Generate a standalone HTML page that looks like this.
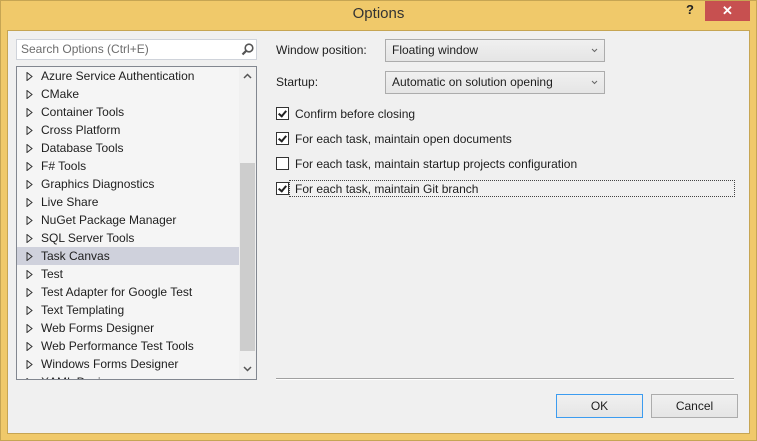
<!DOCTYPE html>
<html><head><meta charset="utf-8"><style>
*{margin:0;padding:0;box-sizing:border-box}
body{width:757px;height:441px;overflow:hidden;background:#f0c96a;font-family:"Liberation Sans",sans-serif;font-size:12px;color:#1e1e1e;position:relative}
.frame{position:absolute;left:0;top:0;width:757px;height:441px;border:1px solid #c6a553}
.title{position:absolute;left:0;top:5px;width:757px;text-align:center;font-size:15px;color:#333}
.help{position:absolute;left:686px;top:2px;font-weight:bold;font-size:13px;color:#222}
.close{position:absolute;left:705px;top:1px;width:45px;height:20px;background:#c75050;color:#fff;text-align:center;font-size:13px;line-height:20px;font-weight:bold}
.client{position:absolute;left:7px;top:30px;width:743px;height:404px;background:#f0f0f0;border:1px solid #c6a553}
.abs{position:absolute}
.search{left:16px;top:39px;width:241px;height:21px;background:#fff;border:1px solid #cfd3da;color:#6d6d6d;padding:2px 0 0 4px}
.tree{left:16px;top:66px;width:241px;height:314px;background:#f5f5f5;border:1px solid #828790;overflow:hidden}
.row{position:absolute;left:0;width:222px;height:18px;line-height:18px;padding-left:24px}
.row.sel{background:#cfd1dc}
.row svg{position:absolute;left:9px;top:5px}
.sb{position:absolute;left:222px;top:0;width:17px;height:312px;background:#f0f0f0}
.thumb{position:absolute;left:1px;top:96px;width:15px;height:188px;background:#cdcdcd}
.lbl{position:absolute}
.combo{position:absolute;left:385px;width:220px;height:23px;border:1px solid #acacac;background:linear-gradient(#f0f0f0,#e5e5e5);padding:3px 0 0 6px}
.combo svg{position:absolute;right:6px;top:8px}
.cb{position:absolute;left:276px;width:13px;height:13px;border:1px solid #333;background:#fff}
.cb.on::after{content:"";position:absolute;left:3px;top:1px;width:3px;height:6px;border:solid #222;border-width:0 2px 2px 0;transform:rotate(40deg)}
.ct{position:absolute;left:295px}
.btn{position:absolute;top:394px;width:87px;height:24px;border:1px solid #acacac;background:linear-gradient(#f0f0f0,#e5e5e5);text-align:center;line-height:22px}
</style></head><body>
<div class="frame"></div>
<div class="title">Options</div>
<div class="help">?</div>
<div class="close">✕</div>
<div class="client"></div>

<div class="abs search">Search Options (Ctrl+E)
<svg class="abs" style="left:224px;top:3px" width="13" height="13" viewBox="0 0 13 13"><circle cx="8" cy="5" r="3.8" fill="none" stroke="#555" stroke-width="1.6"/><path d="M5.3 7.7L1.5 11.5" stroke="#555" stroke-width="2.2"/></svg></div>

<div class="abs tree">
<div class="row" style="top:0"><svg width="7" height="9"><path d="M1 .5L6 4.5 1 8.5Z" fill="none" stroke="#333"/></svg>Azure Service Authentication</div>
<div class="row" style="top:18px"><svg width="7" height="9"><path d="M1 .5L6 4.5 1 8.5Z" fill="none" stroke="#333"/></svg>CMake</div>
<div class="row" style="top:36px"><svg width="7" height="9"><path d="M1 .5L6 4.5 1 8.5Z" fill="none" stroke="#333"/></svg>Container Tools</div>
<div class="row" style="top:54px"><svg width="7" height="9"><path d="M1 .5L6 4.5 1 8.5Z" fill="none" stroke="#333"/></svg>Cross Platform</div>
<div class="row" style="top:72px"><svg width="7" height="9"><path d="M1 .5L6 4.5 1 8.5Z" fill="none" stroke="#333"/></svg>Database Tools</div>
<div class="row" style="top:90px"><svg width="7" height="9"><path d="M1 .5L6 4.5 1 8.5Z" fill="none" stroke="#333"/></svg>F# Tools</div>
<div class="row" style="top:108px"><svg width="7" height="9"><path d="M1 .5L6 4.5 1 8.5Z" fill="none" stroke="#333"/></svg>Graphics Diagnostics</div>
<div class="row" style="top:126px"><svg width="7" height="9"><path d="M1 .5L6 4.5 1 8.5Z" fill="none" stroke="#333"/></svg>Live Share</div>
<div class="row" style="top:144px"><svg width="7" height="9"><path d="M1 .5L6 4.5 1 8.5Z" fill="none" stroke="#333"/></svg>NuGet Package Manager</div>
<div class="row" style="top:162px"><svg width="7" height="9"><path d="M1 .5L6 4.5 1 8.5Z" fill="none" stroke="#333"/></svg>SQL Server Tools</div>
<div class="row sel" style="top:180px"><svg width="7" height="9"><path d="M1 .5L6 4.5 1 8.5Z" fill="none" stroke="#333"/></svg>Task Canvas</div>
<div class="row" style="top:198px"><svg width="7" height="9"><path d="M1 .5L6 4.5 1 8.5Z" fill="none" stroke="#333"/></svg>Test</div>
<div class="row" style="top:216px"><svg width="7" height="9"><path d="M1 .5L6 4.5 1 8.5Z" fill="none" stroke="#333"/></svg>Test Adapter for Google Test</div>
<div class="row" style="top:234px"><svg width="7" height="9"><path d="M1 .5L6 4.5 1 8.5Z" fill="none" stroke="#333"/></svg>Text Templating</div>
<div class="row" style="top:252px"><svg width="7" height="9"><path d="M1 .5L6 4.5 1 8.5Z" fill="none" stroke="#333"/></svg>Web Forms Designer</div>
<div class="row" style="top:270px"><svg width="7" height="9"><path d="M1 .5L6 4.5 1 8.5Z" fill="none" stroke="#333"/></svg>Web Performance Test Tools</div>
<div class="row" style="top:288px"><svg width="7" height="9"><path d="M1 .5L6 4.5 1 8.5Z" fill="none" stroke="#333"/></svg>Windows Forms Designer</div>
<div class="row" style="top:306px"><svg width="7" height="9"><path d="M1 .5L6 4.5 1 8.5Z" fill="none" stroke="#333"/></svg>XAML Designer</div>
<div class="sb"><svg class="abs" style="left:4px;top:6px" width="9" height="6"><path d="M1 5L4.5 1.5 8 5" fill="none" stroke="#555" stroke-width="1.5"/></svg><div class="thumb"></div><svg class="abs" style="left:4px;top:299px" width="9" height="6"><path d="M1 1L4.5 4.5 8 1" fill="none" stroke="#555" stroke-width="1.5"/></svg></div>
</div>

<div class="lbl" style="left:276px;top:43px">Window position:</div>
<div class="combo" style="top:39px">Floating window<svg width="7" height="5"><path d="M1 1L3.5 3.5 6 1" fill="none" stroke="#666"/></svg></div>
<div class="lbl" style="left:276px;top:75px">Startup:</div>
<div class="combo" style="top:71px">Automatic on solution opening<svg width="7" height="5"><path d="M1 1L3.5 3.5 6 1" fill="none" stroke="#666"/></svg></div>

<div class="cb on" style="top:107px"></div><div class="ct" style="top:107px">Confirm before closing</div>
<div class="cb on" style="top:132px"></div><div class="ct" style="top:132px">For each task, maintain open documents</div>
<div class="cb" style="top:157px"></div><div class="ct" style="top:157px">For each task, maintain startup projects configuration</div>
<div class="cb on" style="top:182px"></div><div class="ct" style="top:182px">For each task, maintain Git branch</div>
<div class="abs" style="left:289px;top:180px;width:446px;height:17px;border:1px dotted #444"></div>

<div class="abs" style="left:276px;top:378px;width:458px;height:1px;background:#a0a0a0"></div>
<div class="abs" style="left:276px;top:379px;width:458px;height:1px;background:#fff"></div>

<div class="btn" style="left:556px;border-color:#3c9cf0">OK</div>
<div class="btn" style="left:651px">Cancel</div>
</body></html>
